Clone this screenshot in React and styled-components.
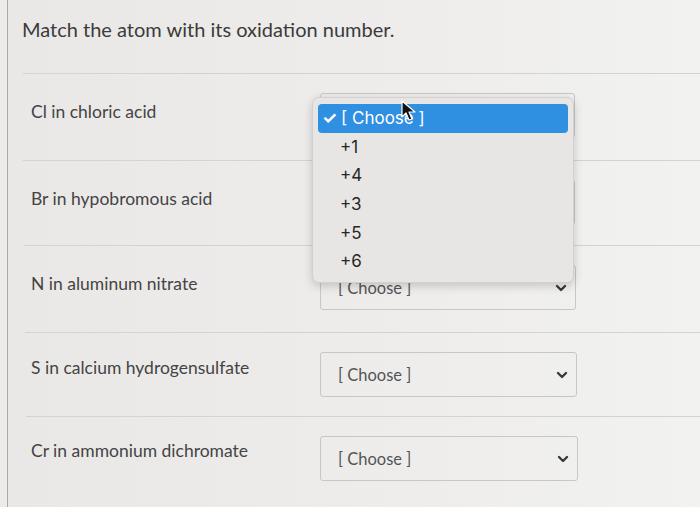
import React from 'react';
import styled, {createGlobalStyle} from 'styled-components';

const GlobalStyle = createGlobalStyle`
    html, body {
        margin: 0;
        padding: 0;
        background: #ecebea;
    }
    body {
        font-family: Lato, "Open Sans", sans-serif;
        width: 700px;
        height: 507px;
        overflow: hidden;
    }
`;

const PageStyle = styled.div`
    margin-left: 7px;
    border-left: 1px solid #a9a9a7;
    height: 507px;
    padding-left: 14px;
    background: linear-gradient(90deg, #e9e8e7 0%, #eeedec 60%, #f2f2f1 100%);
`;

const TitleStyle = styled.h1`
    margin: 0;
    padding-top: 17px;
    height: 73px;
    box-sizing: border-box;
    font-size: 20px;
    font-weight: 400;
    color: #3b3b3b;
`;

const RowStyle = styled.div`
    position: relative;
    display: grid;
    grid-template-columns: 290px 262px;
    align-items: start;
    height: ${props => props.height}px;
    border-top: 1px solid #d3d3d1;
    margin-left: ${props => props.indent}px;
`;

const LabelStyle = styled.div`
    padding-top: ${props => props.top}px;
    padding-left: ${props => 9 - props.indent}px;
    font-size: 17.5px;
    color: #444;
`;

const SelectStyle = styled.div`
    margin-top: 19px;
    margin-left: ${props => 8 - props.indent}px;
    height: 45px;
    box-sizing: border-box;
    border: 1px solid #c7c7c5;
    border-radius: 3px;
    display: flex;
    align-items: center;
    justify-content: space-between;
    padding: 0 8px 0 17px;
    font-size: 16.5px;
    color: #555;
`;

const MenuStyle = styled.div`
    position: absolute;
    z-index: 10;
    left: 289px;
    top: 23px;
    width: 262px;
    height: 186px;
    box-sizing: border-box;
    padding: 6px 5px;
    border-radius: 7px;
    background: #e7e6e5;
    border: 1px solid #d2d1cf;
    box-shadow: 0 3px 10px rgba(0, 0, 0, 0.18);
    font-family: Inter, "Liberation Sans", sans-serif;
    font-size: 17px;
    color: #222;
`;

const OptionStyle = styled.div`
    height: 28.6px;
    display: flex;
    align-items: center;
    border-radius: 4px;
    padding-left: ${props => props.selected ? 4 : 22}px;
    background: ${props => props.selected ? '#2f8fe0' : 'transparent'};
    color: ${props => props.selected ? '#fff' : '#262626'};
`;

const CheckStyle = styled.span`
    width: 19px;
    font-size: 17px;
    font-weight: 700;
`;

const CursorStyle = styled.svg`
    position: absolute;
    left: 88px;
    top: 2px;
`;

const rows = [
    {label: 'Cl in chloric acid', height: 86, indent: 1, top: 27},
    {label: 'Br in hypobromous acid', height: 84, indent: 1, top: 27},
    {label: 'N in aluminum nitrate', height: 86, indent: 2, top: 27},
    {label: 'S in calcium hydrogensulfate', height: 83, indent: 3, top: 24},
    {label: 'Cr in ammonium dichromate', height: 92, indent: 4, top: 23},
];

const options = ['+1', '+4', '+3', '+5', '+6'];

const Chevron = () => (
    <svg width="12" height="8" viewBox="0 0 12 8">
        <path d="M2 2 L6 6 L10 2" fill="none" stroke="#3a3a3a" strokeWidth="2.4" strokeLinecap="round" strokeLinejoin="round"/>
    </svg>
);

const App = () => (
    <PageStyle>
        <GlobalStyle/>
        <TitleStyle>Match the atom with its oxidation number.</TitleStyle>
        {rows.map((row, i) => (
            <RowStyle key={row.label} height={row.height} indent={row.indent}>
                <LabelStyle indent={row.indent} top={row.top}>{row.label}</LabelStyle>
                <SelectStyle indent={row.indent}>
                    <span>[ Choose ]</span>
                    <Chevron/>
                </SelectStyle>
                {i === 0 && (
                    <MenuStyle>
                        <OptionStyle selected>
                            <CheckStyle>✓</CheckStyle>[ Choose ]
                        </OptionStyle>
                        {options.map(o => <OptionStyle key={o}>{o}</OptionStyle>)}
                        <CursorStyle width="16" height="22" viewBox="0 0 16 22">
                            <path d="M1 1 L1 17 L5 13 L8 20 L11 19 L8 12 L14 12 Z" fill="#111" stroke="#fff" strokeWidth="1.2" strokeLinejoin="round"/>
                        </CursorStyle>
                    </MenuStyle>
                )}
            </RowStyle>
        ))}
    </PageStyle>
);

export default App;
